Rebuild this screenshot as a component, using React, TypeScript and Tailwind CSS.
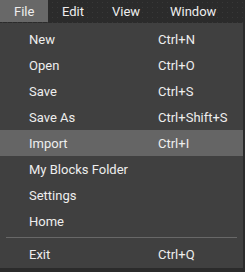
import React from "react";

const items: { label: string; shortcut?: string; active?: boolean }[] = [
  { label: "New", shortcut: "Ctrl+N" },
  { label: "Open", shortcut: "Ctrl+O" },
  { label: "Save", shortcut: "Ctrl+S" },
  { label: "Save As", shortcut: "Ctrl+Shift+S" },
  { label: "Import", shortcut: "Ctrl+I", active: true },
  { label: "My Blocks Folder" },
  { label: "Settings" },
  { label: "Home" },
];

function Row({ label, shortcut, active }: { label: string; shortcut?: string; active?: boolean }) {
  return (
    <div className={`flex h-[26px] items-center ${active ? "bg-[#656565]" : ""}`}>
      <span className="w-[158px] pl-[29px]">{label}</span>
      {shortcut && <span>{shortcut}</span>}
    </div>
  );
}

export default function App() {
  return (
    <div
      className="w-[245px] h-[272px] overflow-hidden bg-[#2b2b2b] text-[#eeeeee] text-[13px] leading-none"
      style={{ fontFamily: "Roboto, 'Liberation Sans', sans-serif" }}
    >
      <div className="flex h-[23px] bg-[#2b2b2b] bg-[radial-gradient(#383838_0.8px,transparent_0.8px)] bg-[size:5px_5px] text-[13px]">
        <div className="flex items-center w-[48px] pl-[14px] h-[22px] bg-[#686868]">File</div>
        <div className="flex items-center pl-[14px] w-[50px] h-[22px]">Edit</div>
        <div className="flex items-center pl-[14px] w-[58px] h-[22px]">View</div>
        <div className="flex items-center pl-[14px] h-[22px]">Window</div>
      </div>
      <div className="w-[243px] h-[245px] bg-[#404040] pt-[3px]">
        {items.map((it) => (
          <Row key={it.label} {...it} />
        ))}
        <div className="mx-[6px] mt-[3px] mb-[3px] h-px bg-[#686868]" />
        <Row label="Exit" shortcut="Ctrl+Q" />
      </div>
    </div>
  );
}
